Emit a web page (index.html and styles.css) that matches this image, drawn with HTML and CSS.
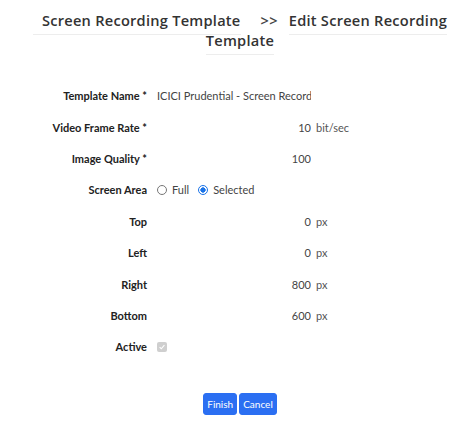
FILE: index.html
```html
<!DOCTYPE html>
<html lang="en">
<head>
<meta charset="utf-8">
<title>Edit Screen Recording Template</title>
<link rel="stylesheet" href="styles.css">
</head>
<body>
<div class="page">
  <h1 class="heading">
    <span class="crumb">Screen Recording Template</span><span class="sep">&gt;&gt;</span><span class="current">Edit Screen Recording</span> <span class="current">Template</span>
  </h1>

  <form class="form">
    <label class="label">Template Name *</label>
    <div class="field"><input class="input text" type="text" value="ICICI Prudential - Screen Recording"></div>
    <span class="unit"></span>

    <label class="label">Video Frame Rate *</label>
    <div class="field"><input class="input num" type="text" value="10"></div>
    <span class="unit">bit/sec</span>

    <label class="label">Image Quality *</label>
    <div class="field"><input class="input num" type="text" value="100"></div>
    <span class="unit"></span>

    <label class="label">Screen Area</label>
    <div class="field radios">
      <span class="radio"></span><span class="opt">Full</span>
      <span class="radio checked"></span><span class="opt">Selected</span>
    </div>
    <span class="unit"></span>

    <label class="label">Top</label>
    <div class="field"><input class="input num" type="text" value="0"></div>
    <span class="unit">px</span>

    <label class="label">Left</label>
    <div class="field"><input class="input num" type="text" value="0"></div>
    <span class="unit">px</span>

    <label class="label">Right</label>
    <div class="field"><input class="input num" type="text" value="800"></div>
    <span class="unit">px</span>

    <label class="label">Bottom</label>
    <div class="field"><input class="input num" type="text" value="600"></div>
    <span class="unit">px</span>

    <label class="label">Active</label>
    <div class="field"><span class="check"><svg viewBox="0 0 10 10" width="8" height="8"><path d="M2 5.2 L4.1 7.2 L8 2.8" fill="none" stroke="#fff" stroke-width="1.4"/></svg></span></div>
    <span class="unit"></span>
  </form>

  <div class="actions">
    <button class="btn" type="button">Finish</button>
    <button class="btn" type="button">Cancel</button>
  </div>
</div>
</body>
</html>
```

FILE: styles.css
```css
html, body {
  margin: 0;
  padding: 0;
  background: #ffffff;
}

.page {
  width: 474px;
  height: 444px;
  overflow: hidden;
  font-family: Lato, "Open Sans", sans-serif;
  color: #222;
}

.heading {
  margin: 0;
  padding: 10px 20px 0 26px;
  text-align: center;
  font-family: "Open Sans", sans-serif;
  font-weight: 600;
  font-size: 14.6px;
  line-height: 20px;
  color: #333;
  letter-spacing: 0.25px;
}

.crumb {
  padding: 0 0 4px 9px;
  border-bottom: 1px solid #ededed;
}

.current {
  padding-bottom: 4px;
  border-bottom: 1px solid #ededed;
}

.sep {
  margin: 0 11px 0 20px;
  color: #444;
}

.form {
  display: grid;
  grid-template-columns: 147px 166px auto;
  grid-auto-rows: 31.4px;
  margin-top: 30px;
  align-items: center;
}

.label {
  text-align: right;
  font-weight: 700;
  font-size: 11px;
  color: #222;
}

.field {
  padding-left: 8px;
  display: flex;
  align-items: center;
}

.input {
  box-sizing: border-box;
  border: none;
  outline: none;
  background: transparent;
  padding: 0 2px;
  margin: 0;
  width: 158px;
  font-family: Lato, sans-serif;
  font-size: 11px;
  color: #444;
}

.input.num {
  text-align: right;
}

.unit {
  padding-left: 3px;
  font-size: 11px;
  color: #555;
}

.radios {
  font-size: 11px;
  color: #444;
}

.radio {
  box-sizing: border-box;
  width: 10px;
  height: 10px;
  margin-left: 2px;
  border: 1px solid #767676;
  border-radius: 50%;
  background: #fff;
}

.radio.checked {
  margin-left: 9px;
  border: 1.5px solid #1a73e8;
  background: radial-gradient(circle, #1a73e8 0 2.4px, #fff 2.9px);
}

.opt {
  margin-left: 5px;
}

.check {
  margin-left: 2px;
  width: 10px;
  height: 10px;
  border-radius: 2px;
  background: #cfcfcf;
  display: flex;
  align-items: center;
  justify-content: center;
}

.actions {
  display: flex;
  justify-content: center;
  gap: 2px;
  margin-top: 30px;
  padding-left: 6px;
}

.btn {
  font-family: Lato, sans-serif;
  font-size: 10px;
  color: #fff;
  background: #2b6ff2;
  border: 1px solid #2b6ff2;
  border-radius: 3px;
  height: 22px;
  padding: 0 3px;
}
```
